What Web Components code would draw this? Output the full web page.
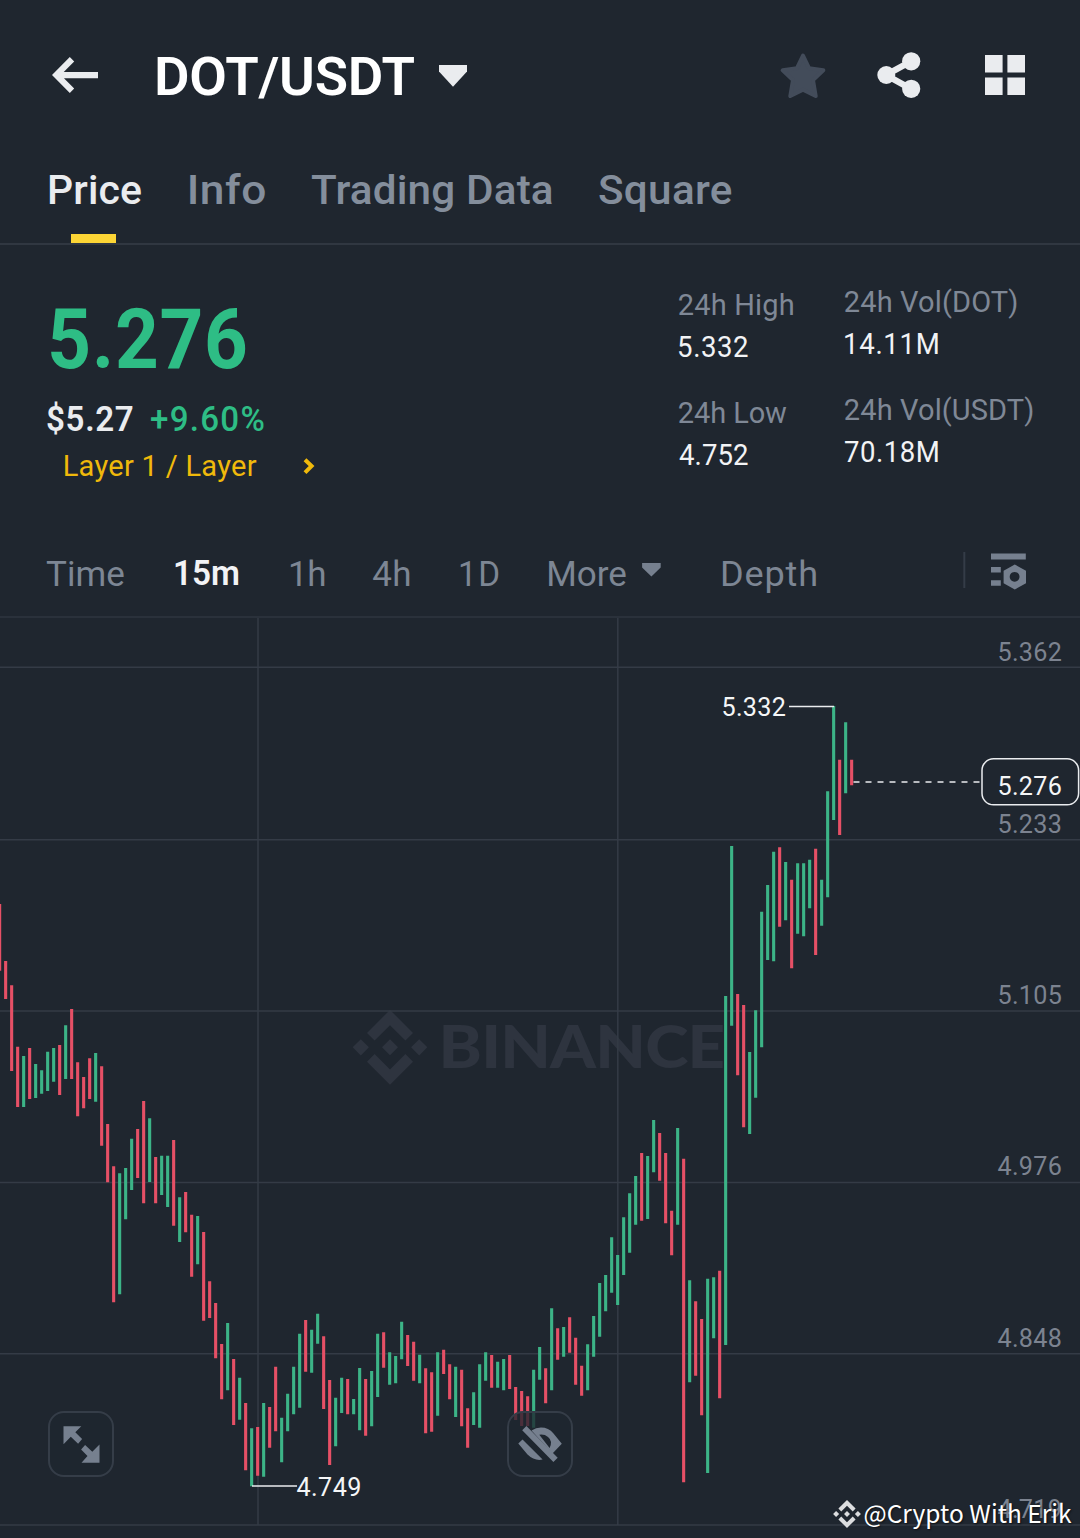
<!DOCTYPE html>
<html lang="en">
<head>
<meta charset="utf-8">
<title>DOT/USDT</title>
<style>
html,body{margin:0;background:#1f262f}
body{width:1080px;height:1538px;overflow:hidden;font-family:Roboto,"Noto Sans",sans-serif;color:#eaecef}
</style>
</head>
<body>
<trade-page></trade-page>
<script>
// Diamond-shaped exchange mark, centred on 0,0 and 75 units wide.
const MARK = `<path d="M0-37.4L23-14.4L15.4-6.8L0-22.1L-15.4-6.8L-23-14.4ZM0 37.4L23 14.4L15.4 6.8L0 22.1L-15.4 6.8L-23 14.4ZM0-8L8 0L0 8L-8 0ZM-29.2-8.1L-21.1 0L-29.2 8.1L-37.3 0ZM29.2-8.1L37.3 0L29.2 8.1L21.1 0Z"/>`;

class Base extends HTMLElement {
  connectedCallback() {
    if (this.shadowRoot) return;
    this.attachShadow({ mode: 'open' }).innerHTML = this.render();
    this.ready();
  }
  ready() {}
}

// One line of text whose ink spans exactly `w` pixels; the box starts at the cap line.
customElements.define('fit-text', class extends Base {
  render() {
    return `<style>:host{display:block;flex:none;height:.74em;line-height:.74em;white-space:pre}
      span{display:inline-block;transform-origin:0 50%}</style><span><slot></slot></span>`;
  }
  ready() {
    const w = +this.getAttribute('w'), sx = +(this.getAttribute('sx') || 1);
    const text = this.textContent, cs = getComputedStyle(this);
    const ctx = document.createElement('canvas').getContext('2d');
    ctx.font = `${cs.fontWeight} ${cs.fontSize} ${cs.fontFamily}`;
    const m = ctx.measureText(text);
    const ink = m.actualBoundingBoxRight + m.actualBoundingBoxLeft;
    const span = this.shadowRoot.querySelector('span');
    span.style.letterSpacing = (w / sx - ink) / (text.length - 1) + 'px';
    span.style.transform = `translateX(${m.actualBoundingBoxLeft * sx}px) scaleX(${sx})`;
    this.style.width = w + 'px';
  }
});

customElements.define('app-bar', class extends Base {
  render() {
    return `<style>
      :host{display:flex;height:153px;align-items:flex-start;box-sizing:border-box;padding:52px 55px 0 52px;fill:#eaecef}
      svg{display:block;flex:none}
      .t{font-size:53px;font-weight:600;color:#fff;margin:6px 25px 0 58.5px}
      .sp{flex:1}
    </style>
    <svg width="46" height="37" style="margin-top:5px" viewBox="52 57 46 37"><path d="M72 59.2L56.3 75L72 90.8M55 75.1H98" fill="none" stroke="#eaecef" stroke-width="6.2"/></svg>
    <fit-text class="t" w="257.5" sx="1.03">DOT/USDT</fit-text>
    <svg width="28" height="22" style="margin-top:13px" viewBox="439 65 28 22"><path d="M439 65H467V71.5L453 86.7L439 71.5Z"/></svg>
    <div class="sp"></div>
    <svg width="46" height="48" viewBox="780 52 46 48"><path d="M803 55.5L809 68.2L823.3 70.3L813 80L815.7 96L803 89.7L790.3 96L793 80L782.7 70.3L797 68.2Z" fill="#434c5a" stroke="#434c5a" stroke-width="4" stroke-linejoin="round"/></svg>
    <svg style="margin-left:50px" width="46" height="48" viewBox="876 52 46 48"><path d="M911.2 61.3L886 75L911.2 89" fill="none" stroke="#eaecef" stroke-width="6.4"/><circle cx="886.3" cy="75" r="9"/><circle cx="911.2" cy="61.3" r="9.1"/><circle cx="911.2" cy="88.8" r="9.1"/></svg>
    <svg style="margin:3px 0 0 63px" width="40" height="40" viewBox="985 55 40 40"><path d="M985 55h17.6v17.4H985zM1007.4 55H1025v17.4h-17.6zM985 77.4h17.6V95H985zM1007.4 77.4H1025V95h-17.6z"/></svg>`;
  }
});

customElements.define('page-tabs', class extends Base {
  render() {
    return `<style>
      :host{display:flex;box-sizing:border-box;height:92px;padding:22px 0 0 49px;border-bottom:2px solid #303741;font-size:41px;font-weight:500;color:#848e9c}
      .on{color:#eaecef}
      .tab{display:flex;flex-direction:column;align-items:center;width:92px;height:68px;justify-content:space-between}
      .bar{width:45px;height:9px;margin-right:3px;background:#fcd535}
    </style>
    <div class="tab"><fit-text class="on" w="92">Price</fit-text><div class="bar"></div></div>
    <fit-text style="margin-left:48.5px" w="75" sx="1.08">Info</fit-text>
    <fit-text style="margin-left:46.5px" w="241.5" sx="1.03">Trading Data</fit-text>
    <fit-text style="margin-left:46.5px" w="132.5" sx="1.03">Square</fit-text>`;
  }
});

customElements.define('stat-item', class extends Base {
  render() {
    const a = n => this.getAttribute(n);
    return `<style>
      :host{display:flex;flex-direction:column;gap:20.6px;font-size:29px}
      .l{color:#7f8896}.v{color:#f2f3f5}
    </style>
    <fit-text class="l" w="${a('lw')}">${a('label')}</fit-text>
    <fit-text class="v" w="${a('vw')}" sx=".95">${a('value')}</fit-text>`;
  }
});

customElements.define('price-summary', class extends Base {
  render() {
    return `<style>
      :host{display:flex;box-sizing:border-box;height:290px;padding:0 0 0 46.5px}
      .left{flex:none;width:632.3px;padding-top:63.5px}
      .p{font-size:83px;font-weight:700;color:#2ebd85;margin-left:4px}
      .r{display:flex;gap:18.2px;font-size:34.5px;font-weight:600;margin-top:37px}
      .r .g{color:#2ebd85;font-weight:500}
      .y{display:flex;align-items:center;color:#f0b90b;font-size:29px;margin:24px 0 0 18.2px;gap:46.5px}
      .y svg{margin-top:-2px}
      .c{display:flex;flex-direction:column;gap:44.5px}
    </style>
    <div class="left">
      <fit-text class="p" w="194.5" sx=".92">5.276</fit-text>
      <div class="r"><fit-text w="86" sx=".96">$5.27</fit-text><fit-text class="g" w="112.5" sx=".96">+9.60%</fit-text></div>
      <div class="y"><fit-text w="192">Layer 1 / Layer</fit-text>
      <svg width="12" height="18" viewBox="303 456 12 18"><path d="M305 458.7L311.6 465L305 471.7" fill="none" stroke="#f0b90b" stroke-width="4"/></svg></div>
    </div>
    <div class="c" style="width:166px;padding-top:49.5px">
      <stat-item label="24h High" lw="115" value="5.332" vw="69.2"></stat-item>
      <stat-item label="24h Low" lw="108.3" value="4.752" vw="69.2"></stat-item>
    </div>
    <div class="c" style="padding-top:46.5px">
      <stat-item label="24h Vol(DOT)" lw="172.5" value="14.11M" vw="92.5"></stat-item>
      <stat-item label="24h Vol(USDT)" lw="188.5" value="70.18M" vw="92.5"></stat-item>
    </div>`;
  }
});

customElements.define('interval-bar', class extends Base {
  render() {
    return `<style>
      :host{display:flex;box-sizing:border-box;height:83px;padding:27px 53px 0 46px;border-bottom:2px solid #2a313b;font-size:35px;color:#7d8694}
      fit-text{margin:0 var(--r,0) 0 0}
      svg{display:block;flex:none}
    </style>
    <fit-text w="78.3" style="--r:50.7px">Time</fit-text>
    <fit-text w="63.6" sx=".95" style="--r:51.4px;color:#f2f3f5;font-weight:600;margin-top:-1px">15m</fit-text>
    <fit-text w="34.4" style="--r:47.9px">1h</fit-text>
    <fit-text w="37" style="--r:50.7px">4h</fit-text>
    <fit-text w="38.3" sx=".95" style="--r:50px">1D</fit-text>
    <fit-text w="78.1" style="--r:15.2px">More</fit-text>
    <svg width="19" height="14" style="margin:1px 61.9px 0 0" viewBox="641.5 563 19 14"><path d="M641.6 563H660.2V567.5L650.9 576.6L641.6 567.5Z" fill="#76808f"/></svg>
    <fit-text w="93.7" sx="1.03">Depth</fit-text>
    <div style="flex:1"></div>
    <svg width="64" height="39" style="margin-top:-11px" viewBox="963 551 64 39" fill="#76808f"><path d="M963.3 552h2v36h-2z" fill="#343c47"/><path d="M991 553.4h34.8v6H991zM991 567h9.8v5.4H991zM991 580.2h9.8v5.6H991z"/><path fill-rule="evenodd" d="M1014.8 564.5L1026 570.8V583.2L1014.8 589.5L1003.6 583.2V570.8ZM1014.6 571.9a4.9 4.9 0 1 0 .01 0Z"/></svg>`;
  }
});

customElements.define('chart-button', class extends Base {
  render() {
    return `<style>
      :host{position:absolute;display:flex;align-items:center;justify-content:center;box-sizing:border-box;width:66px;height:66px;border:2.5px solid #353d48;border-radius:16px;background:rgba(31,38,47,.78)}
      ::slotted(svg){display:block;flex:none}
    </style><slot></slot>`;
  }
});

// Bars from left to right, 6px apart: direction, high, low (page pixels).
const BARS = `R904 970.7 R961 999 R985.3 1071 R1046.7 1107 G1056 1107 R1048 1099 G1064 1098 G1070.3 1093.7 G1051.7 1091 G1048 1081.7 R1045 1095 G1025.3 1079 R1009 1079 R1062.3 1116.3 R1077 1108.3 R1058.3 1099 G1053 1101.7 R1066.3 1145.7 R1124 1182.3 R1166.3 1302.3 G1173.3 1294.3 G1168 1219.3 G1138.7 1190 R1129 1178 R1101 1203.3 G1118.3 1182 R1157 1203.3 G1155.7 1195 G1155.7 1207 R1140 1225.7 G1197.3 1242 R1192 1232.3 R1214.7 1276.7 G1216 1264.3
R1232 1320.7 R1281.3 1318 R1303 1358.3 R1344 1399.3 G1323 1390.3 R1359 1425 G1377.7 1419.7 R1403 1470.3 G1428.3 1486.3 R1427 1475.7 G1403 1476.7 R1407 1447.7 R1366.7 1431.3 G1417.7 1462.3 G1393.7 1431.3 G1366.7 1414.3 G1333.7 1407.7 R1320 1371.7 G1329.7 1372.7 G1313.7 1343.7 R1336.3 1409 R1380 1465 G1397.7 1446.3 G1377.7 1413 R1379 1414.3 G1399 1414.3 G1368 1430.3 R1379 1435.7 G1371 1426.3 G1333.7 1397 R1332.3 1367.7 G1352.3 1384.7 G1356 1383.3 G1321.7 1359.3 R1335 1366 R1341.7 1380.7 G1354.7 1383.3 R1368.3 1433.3 R1372.3 1431.7 G1352.3 1415.7 R1349.7 1374 R1364.3 1399.3 G1366.7 1417
R1369.7 1426.3 R1408.3 1447.7 G1392.3 1425 G1364.3 1427.7 G1352.3 1380.7 R1355 1387.7 G1361.7 1387.7 G1359 1390.3 R1355 1389 R1387 1420 R1391 1426 R1396.3 1426 G1369.7 1427.7 G1347 1379.7 R1368.3 1403.3 G1308.3 1390.3 R1328.3 1359.7 G1327 1356.7 R1317.3 1352.7 R1337.7 1384.7 R1365.7 1395.7 G1344.3 1390.3 G1316 1356.7 G1283 1336.7 G1275 1311.3 G1237.3 1292.7 G1255 1305
G1217.3 1275 G1193.3 1252.7 G1176 1224.7 R1153 1220.7 G1156 1219 G1120 1172.3 R1133 1180.7 R1153 1223.3 R1210.7 1255.3 G1128 1224.7 R1158.7 1482.3 G1280.3 1382.3 R1301.3 1375.7 R1319 1415.3 G1278.7 1473 G1277.3 1338.3 R1270.7 1398.3 G996 1345
G846 1025.7 R994 1075.3 R1005 1127.3 G1052 1134 G1010.3 1097.7 G911.7 1047.3 G885 960 G851.7 961.3 R847.3 926.7 G862 920.3 R879.7 968.3 G863.3 933.7 G863.3 936.3 G859.7 908.3 R848.7 955 G879.7 925.7 G791.3 897.3 G706 820 R759.7 835 G722.3 793.3 R759.7 785.3`;

customElements.define('price-chart', class extends Base {
  render() {
    const d = { R: '', G: '' };
    [...BARS.matchAll(/([RG])([\d.]+) ([\d.]+)/g)].forEach((m, i) => {
      d[m[1]] += `M${(5.65 + 6 * (i - 1)).toFixed(2)} ${m[2]}V${m[3]}`;
    });
    const label = (t, x, y, fill, w = 63) =>
      `<text y="${y}" fill="${fill}" textLength="${((w + 1.6) / .95).toFixed(1)}" transform="translate(${x - 1.3} 0) scale(.95 1)">${t}</text>`;
    const axis = [['5.362', 661.5], ['5.233', 833.5], ['5.105', 1004.5], ['4.976', 1175.5], ['4.848', 1347.5], ['4.719', 1518.5]]
      .map(([t, y]) => label(t, 998.7, y, '#7c8390')).join('');
    return `<style>
      :host{display:block;position:relative;height:920px;overflow:hidden}
      .plot{display:block;font-size:26.5px}
      .sig{position:absolute;right:8px;top:882px;display:flex;align-items:flex-start;gap:4px;
        font-family:"Noto Sans CJK SC","Noto Sans",sans-serif;font-size:24.5px;font-weight:400;color:#fff;text-shadow:1px 1px 2px rgba(0,0,0,.6)}
      .sig fit-text{margin-top:4px}
    </style>
    <svg class="plot" width="1080" height="920" viewBox="0 618 1080 920">
      <g fill="#2e343f"><g transform="translate(390 1047.3)">${MARK}</g>
      <text transform="translate(438.5 1068.3) scale(1.12 1)" font-family="Lato" font-weight="900" font-size="58.5" textLength="256">BINANCE</text></g>
      <path d="M0 667.3H1080M0 839.7H1080M0 1011H1080M0 1182.4H1080M0 1353.7H1080M0 1525H1080M258 618V1525M617.8 618V1525" stroke="#343b46" stroke-width="1.5" fill="none"/>
      ${axis}
      <path d="${d.G}" stroke="#3cb487" stroke-width="3.1"/>
      <path d="${d.R}" stroke="#e65066" stroke-width="3.1"/>
      <path d="M789 706.5H834M252 1486H297" stroke="#eaecef" stroke-width="1.6"/>
      <path d="M853.5 782H981" stroke="#eaecef" stroke-width="1.6" stroke-dasharray="6 6"/>
      <rect x="982" y="758.8" width="96.6" height="46" rx="11.5" fill="#1f262f" stroke="#eaecef" stroke-width="1.5"/>
      ${label('5.276', 998.7, 795.5, '#f5f6f7')}
      ${label('5.332', 722.7, 716.3, '#f5f6f7')}
      ${label('4.749', 297.7, 1496.3, '#f5f6f7', 63.5)}
    </svg>
    <chart-button style="left:48px;top:793px"><svg width="37" height="37" viewBox="62.5 1425.5 37 37" fill="#76808f"><path d="M63 1425.7H80.8L74.8 1431.7L81.6 1438.6L77.6 1443.3L70.3 1436.3L63 1443.8ZM99 1462.3H81L87 1455.6L80.6 1448.9L84.6 1444.4L91.8 1451.2L99 1444Z"/></svg></chart-button>
    <chart-button style="left:507px;top:793px"><svg width="46" height="38" viewBox="517 1425 46 38" fill="#76808f"><path d="M526.4 1426L522.2 1430.2L553.4 1462L557.7 1457.7ZM518.3 1443.6L522.5 1439.4L542.6 1459.6Q534.5 1461.3 527.5 1454.5Z"/><path fill-rule="evenodd" d="M531.5 1430.5Q536 1427.6 541 1427.6Q548.5 1427.6 553.5 1433.5L561.8 1443.8L552.5 1453.5ZM539.3 1434.7L549.6 1447.9Q553 1441 548 1437Q544.5 1434 539.3 1434.7Z"/></svg></chart-button>
    <div class="sig"><svg width="28" height="28" viewBox="-37.5 -37.5 75 75" fill="#dcdddf">${MARK}</svg><fit-text w="207.5">@Crypto With Erik</fit-text></div>`;
  }
});

customElements.define('trade-page', class extends Base {
  render() {
    return `<style>:host{display:flex;flex-direction:column;width:1080px;height:1538px;overflow:hidden;background:#1f262f}</style>
    <app-bar></app-bar><page-tabs></page-tabs><price-summary></price-summary><interval-bar></interval-bar><price-chart></price-chart>`;
  }
});
</script>
</body>
</html>
